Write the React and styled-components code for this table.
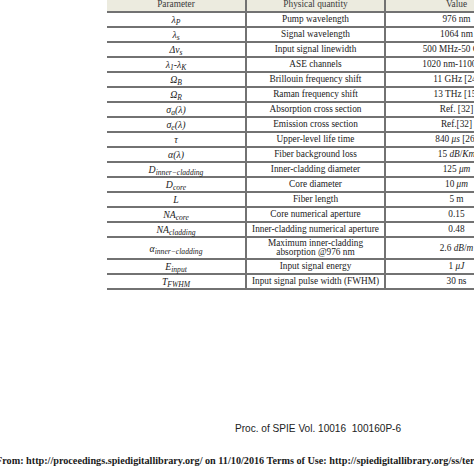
import React from "react";
import styled, { createGlobalStyle } from "styled-components";

const GlobalStyle = createGlobalStyle`
  html, body {
    margin: 0;
    padding: 0;
    background: #ffffff;
    overflow: hidden;
  }
`;

const Page = styled.div`
  width: 474px;
  height: 474px;
  overflow: hidden;
  background: #ffffff;
  display: flex;
  flex-direction: column;
  font-family: "Liberation Serif", "Times New Roman", serif;
  color: #222;
`;

const Table = styled.div`
  margin-top: -3px;
  margin-left: 107px;
  width: 420px;
  display: flex;
  flex-direction: column;
`;

const Row = styled.div`
  display: grid;
  grid-template-columns: 140px 139px 141px;
  height: ${(p) => (p.$tall ? 22 : 15)}px;
  box-sizing: border-box;
  border-bottom: 2px solid #727272;
  background: ${(p) => (p.$head ? "#ecebdf" : "transparent")};
  font-size: 9.3px;
`;

const Cell = styled.div`
  display: flex;
  align-items: center;
  justify-content: center;
  text-align: center;
  white-space: nowrap;
  line-height: 9px;
  border-right: ${(p) => (p.$last ? "none" : "2px solid #727272")};
  color: ${(p) => (p.$head ? "#3a3a3a" : "#222")};
  padding-top: ${(p) => (p.$head ? "1px" : "0")};
`;

const Sym = styled.span`
  font-style: italic;
  font-size: 9.8px;
`;

const Sub = styled.sub`
  font-style: italic;
  font-size: 7.6px;
  vertical-align: -2px;
  line-height: 0;
`;

const Em = styled.span`
  font-style: italic;
`;

const Proc = styled.div`
  margin-top: 133px;
  padding-left: 235px;
  font-family: "Liberation Sans", Arial, sans-serif;
  font-size: 10.1px;
  line-height: 12px;
  color: #222;
  white-space: pre;
`;

const Download = styled.div`
  margin-top: 20px;
  margin-left: -4px;
  font-family: "Liberation Serif", "Times New Roman", serif;
  font-weight: bold;
  font-size: 10.2px;
  line-height: 12px;
  color: #1a1a1a;
  white-space: nowrap;
`;

const rows = [
  [<Sym>λ<Sub>P</Sub></Sym>, "Pump wavelength", "976 nm"],
  [<Sym>λ<Sub>s</Sub></Sym>, "Signal wavelength", "1064 nm"],
  [<Sym>Δν<Sub>s</Sub></Sym>, "Input signal linewidth", "500 MHz-50 GHz"],
  [<Sym>λ<Sub>1</Sub>-λ<Sub>K</Sub></Sym>, "ASE channels", "1020 nm-1100 nm"],
  [<Sym>Ω<Sub>B</Sub></Sym>, "Brillouin frequency shift", "11 GHz [24]"],
  [<Sym>Ω<Sub>R</Sub></Sym>, "Raman frequency shift", "13 THz [15]"],
  [<Sym>σ<Sub>a</Sub>(λ)</Sym>, "Absorption cross section", "Ref. [32]"],
  [<Sym>σ<Sub>e</Sub>(λ)</Sym>, "Emission cross section", "Ref.[32]"],
  [<Sym>τ</Sym>, "Upper-level life time", <span>840 <Em>μs</Em> [26]</span>],
  [<Sym>α(λ)</Sym>, "Fiber background loss", <span>15 <Em>dB</Em>/<Em>Km</Em></span>],
  [<Sym>D<Sub>inner−cladding</Sub></Sym>, "Inner-cladding diameter", <span>125 <Em>μm</Em></span>],
  [<Sym>D<Sub>core</Sub></Sym>, "Core diameter", <span>10 <Em>μm</Em></span>],
  [<Sym>L</Sym>, "Fiber length", "5 m"],
  [<Sym>NA<Sub>core</Sub></Sym>, "Core numerical aperture", "0.15"],
  [<Sym>NA<Sub>cladding</Sub></Sym>, "Inner-cladding numerical aperture", "0.48"],
  [
    <Sym>α<Sub>inner−cladding</Sub></Sym>,
    <span>Maximum inner-cladding<br />absorption @976 nm</span>,
    <span>2.6 <Em>dB</Em>/<Em>m</Em></span>,
    true,
  ],
  [<Sym>E<Sub>input</Sub></Sym>, "Input signal energy", <span>1 <Em>μJ</Em></span>],
  [<Sym>T<Sub>FWHM</Sub></Sym>, "Input signal pulse width (FWHM)", "30 ns"],
];

const App = () => {
  return (
    <Page>
      <GlobalStyle />
      <Table>
        <Row $head style={{ height: 16 }}>
          <Cell $head>Parameter</Cell>
          <Cell $head>Physical quantity</Cell>
          <Cell $head $last>Value</Cell>
        </Row>
        {rows.map(([sym, name, value, tall], i) => (
          <Row key={i} $tall={tall}>
            <Cell>{sym}</Cell>
            <Cell>{name}</Cell>
            <Cell $last>{value}</Cell>
          </Row>
        ))}
      </Table>
      <Proc>Proc. of SPIE Vol. 10016  100160P-6</Proc>
      <Download>
        From: http://proceedings.spiedigitallibrary.org/ on 11/10/2016 Terms of Use: http://spiedigitallibrary.org/ss/termsofuse.aspx
      </Download>
    </Page>
  );
};

export default App;
